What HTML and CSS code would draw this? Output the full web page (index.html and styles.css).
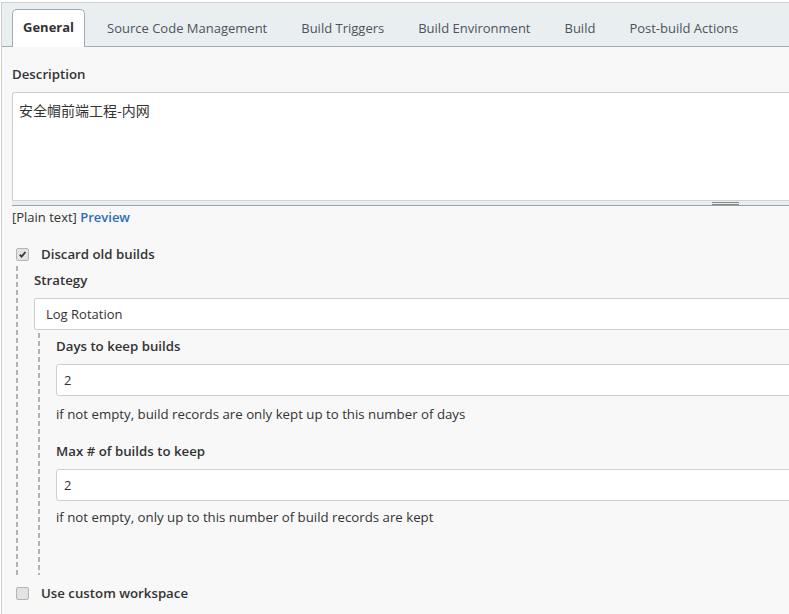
FILE: index.html
```html
<!DOCTYPE html>
<html lang="en">
<head>
<meta charset="utf-8">
<title>General</title>
<link rel="stylesheet" href="styles.css">
</head>
<body>
<div class="frame">
  <div class="tabbar">
    <div class="tab active">General</div>
    <div class="tab">Source Code Management</div>
    <div class="tab">Build Triggers</div>
    <div class="tab">Build Environment</div>
    <div class="tab">Build</div>
    <div class="tab">Post-build Actions</div>
  </div>
  <div class="content">
    <div class="label first">Description</div>
    <div class="textarea-wrap">
      <div class="textarea">安全帽前端工程-内网</div>
      <div class="grip"><span class="grip-lines"></span></div>
    </div>
    <div class="plain">[Plain text] <span class="link">Preview</span></div>

    <div class="check-row discard">
      <span class="checkbox checked">
        <svg viewBox="0 0 12 12" width="12" height="12"><path d="M3 6.2 L5 8.4 L9.2 3.2" fill="none" stroke="#333" stroke-width="1.9"/></svg>
      </span>
      <span class="check-label">Discard old builds</span>
    </div>
    <div class="nested outer">
      <div class="label">Strategy</div>
      <div class="field select">Log Rotation</div>
      <div class="nested inner">
        <div class="label">Days to keep builds</div>
        <div class="field">2</div>
        <div class="help">if not empty, build records are only kept up to this number of days</div>
        <div class="label second">Max # of builds to keep</div>
        <div class="field">2</div>
        <div class="help help-second">if not empty, only up to this number of build records are kept</div>
      </div>
    </div>
    <div class="check-row workspace">
      <span class="checkbox"></span>
      <span class="check-label">Use custom workspace</span>
    </div>
  </div>
</div>
</body>
</html>
```
FILE: styles.css
```css
html, body {
  margin: 0;
  padding: 0;
  overflow: hidden;
  background: #fff;
}
body {
  font-family: "Open Sans", "Noto Sans", sans-serif;
  font-size: 13px;
  color: #333;
}
.frame {
  margin: 2px 0 0 1px;
  width: 1437px;
  border-left: 1px solid #cfcfcf;
  border-top: 1px solid #cfcfcf;
  background: #f8f8f8;
  height: 700px;
}
.tabbar {
  display: flex;
  gap: 10px;
  align-items: flex-end;
  height: 43px;
  padding-left: 10px;
  background: #e9eef1;
  border-bottom: 1px solid #a3acb4;
}
.tab {
  height: 36px;
  line-height: 35px;
  padding: 0 11px;
  color: #4d545d;
  font-size: 13px;
  margin-bottom: -1px;
  border: 1px solid transparent;
  border-bottom: none;
}
.tab.active {
  background: #fff;
  border-color: #a3acb4;
  border-radius: 5px 5px 0 0;
  color: #333;
  font-weight: 700;
  height: 37px;
  padding: 0 10px;
}
.content {
  padding-left: 10px;
}
.label {
  font-weight: 600;
  font-size: 13.25px;
  line-height: 20px;
  color: #333;
}
.label.first {
  padding-top: 17px;
}
.textarea-wrap {
  margin-top: 8px;
}
.textarea {
  height: 101px;
  background: #fff;
  border: 1px solid #cfcfcf;
  border-bottom: none;
  border-radius: 3px 3px 0 0;
  padding: 6px 6px 0;
  font-family: "Noto Sans CJK SC", sans-serif;
  font-size: 14px;
  line-height: 22px;
}
.grip {
  height: 4px;
  background: #e9eef1;
  border-top: 1px solid #d0d4d8;
  border-bottom: 1px solid #98a2aa;
  display: flex;
  justify-content: center;
  align-items: center;
}
.grip-lines {
  display: block;
  width: 27px;
  height: 1px;
  border-top: 1px solid #7f8a80;
  border-bottom: 1px solid #7f8a80;
}
.plain {
  line-height: 20px;
  margin-top: 1px;
  font-size: 13px;
  color: #333;
}
.link {
  color: #2a6ebb;
  font-weight: 600;
}
.check-row {
  display: flex;
  align-items: center;
  height: 20px;
  padding-left: 4px;
}
.discard {
  margin-top: 17px;
}
.checkbox {
  width: 11px;
  height: 11px;
  border: 1px solid #b5b5b5;
  border-radius: 2px;
  background: #e3e3e3;
  display: flex;
  align-items: center;
  justify-content: center;
  flex: none;
}
.checkbox svg {
  width: 11px;
  height: 11px;
}
.check-label {
  margin-left: 12px;
  font-weight: 600;
  font-size: 13.25px;
}
.nested {
  padding-left: 22px;
  background-image: linear-gradient(#b3b3b3 62%, transparent 62%);
  background-size: 2px 8px;
  background-repeat: repeat-y;
  background-position: 4px 0;
}
.nested.outer {
  padding-top: 4px;
  margin-top: 2px;
}
.field {
  margin-top: 8px;
  height: 30px;
  line-height: 30px;
  background: #fff;
  border: 1px solid #cfcfcf;
  border-radius: 3px;
  padding-left: 7px;
  font-size: 13px;
}
.field.select {
  padding-left: 11px;
  border-radius: 2px;
}
.nested.inner {
  margin-top: 3px;
  padding-top: 3px;
  padding-bottom: 48px;
}
.help {
  margin-top: 8px;
  line-height: 20px;
  font-size: 13.25px;
  color: #333;
}
.help.help-second {
  margin-top: 6px;
}
.label.second {
  margin-top: 17px;
}
.workspace {
  margin-top: 8px;
}
```
